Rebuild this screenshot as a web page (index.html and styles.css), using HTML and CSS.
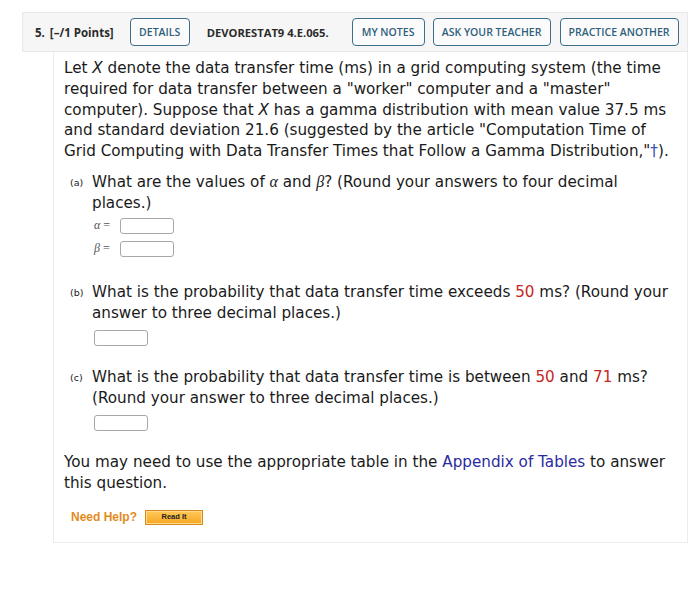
FILE: index.html
```html
<!DOCTYPE html>
<html>
<head>
<meta charset="utf-8">
<link rel="stylesheet" href="styles.css">
</head>
<body>
<div class="question">
  <div class="qhead">
    <span class="qnum">5.</span>
    <span class="qpts">[–/1 Points]</span>
    <span class="btn btn-details">DETAILS</span>
    <span class="qcode">DEVORESTAT9 4.E.065.</span>
    <span class="btn btn-notes">MY NOTES</span>
    <span class="btn btn-ask">ASK YOUR TEACHER</span>
    <span class="btn btn-practice">PRACTICE ANOTHER</span>
  </div>
  <div class="qbody">
    <p class="intro">Let <i>X</i> denote the data transfer time (ms) in a grid computing system (the time required for data transfer between a "worker" computer and a "master" computer). Suppose that <i>X</i> has a gamma distribution with mean value 37.5 ms and standard deviation 21.6 (suggested by the article "Computation Time of Grid Computing with Data Transfer Times that Follow a Gamma Distribution,"<span class="dagger">†</span>).</p>

    <div class="part part-a">
      <span class="plabel">(a)</span>
      <div class="pcontent">
        <p class="ptext">What are the values of <i class="greek">α</i> and <i class="greek">β</i>? (Round your answers to four decimal places.)</p>
        <div class="ansrow first"><span class="alabel"><i>α</i> =</span><span class="box"></span></div>
        <div class="ansrow"><span class="alabel"><i>β</i> =</span><span class="box"></span></div>
      </div>
    </div>

    <div class="part part-b">
      <span class="plabel">(b)</span>
      <div class="pcontent">
        <p class="ptext">What is the probability that data transfer time exceeds <span class="red">50</span> ms? (Round your answer to three decimal places.)</p>
        <span class="box"></span>
      </div>
    </div>

    <div class="part part-c">
      <span class="plabel">(c)</span>
      <div class="pcontent">
        <p class="ptext">What is the probability that data transfer time is between <span class="red">50</span> and <span class="red">71</span> ms? (Round your answer to three decimal places.)</p>
        <span class="box"></span>
      </div>
    </div>

    <p class="note">You may need to use the appropriate table in the <span class="link">Appendix of Tables</span> to answer this question.</p>

    <div class="help">
      <span class="helptext">Need Help?</span>
      <span class="readit">Read It</span>
    </div>
  </div>
</div>
</body>
</html>
```
FILE: styles.css
```css
html, body {
  margin: 0;
  padding: 0;
  background: #ffffff;
}
body {
  padding: 12px 0 0 22px;
}
.question {
  width: 666px;
}
.qhead {
  box-sizing: border-box;
  height: 40px;
  background: #f6f6f6;
  border: 1px solid #e8e8e8;
  display: flex;
  align-items: center;
  padding-left: 12px;
  font-family: "Open Sans", sans-serif;
  font-weight: 700;
  font-size: 11.5px;
  color: #2b2b2b;
  white-space: nowrap;
}
.qhead > span {
  flex: none;
}
.qnum {
  margin-right: 5px;
}
.qpts {
  margin-right: 16px;
}
.btn {
  box-sizing: border-box;
  height: 28px;
  display: inline-flex;
  align-items: center;
  justify-content: center;
  border: 1.5px solid #3d6f8c;
  border-radius: 4px;
  background: #fbfbfb;
  color: #2e5f7c;
  font-size: 10.5px;
  font-weight: 600;
}
.btn-details { width: 60px; }
.qcode { margin-left: 17px; margin-right: 23px; font-size: 11.2px; }
.btn-notes { width: 73px; }
.btn-ask { width: 118px; margin-left: 8px; }
.btn-practice { width: 119px; margin-left: 9px; }

.qbody {
  margin-left: 31px;
  border-left: 1px solid #ececec;
  border-right: 1px solid #ececec;
  border-bottom: 1px solid #ececec;
  padding: 6px 15px 13px 10px;
  font-family: "DejaVu Sans", Verdana, sans-serif;
  font-size: 15.2px;
  line-height: 20.75px;
  color: #1a1a1a;
}
.qbody .intro,
.qbody .ptext {
  margin: 0;
}
.dagger { color: #3b52b4; }
.greek {
  font-family: "Liberation Serif", serif;
  font-size: 16px;
}
.part {
  display: flex;
  margin-left: 6px;
}
.part-a { margin-top: 10px; }
.part-b { margin-top: 22px; }
.part-c { margin-top: 21px; }
.plabel {
  width: 22px;
  flex: none;
  font-size: 9.5px;
  font-family: "DejaVu Sans", Verdana, sans-serif;
  padding-top: 1px;
}
.pcontent {
  flex: 1;
}
.ansrow {
  display: flex;
  align-items: center;
  height: 23px;
}
.ansrow.first { margin-top: 1px; }
.alabel {
  width: 26px;
  padding-left: 2px;
  font-family: "Liberation Serif", serif;
  font-size: 12px;
  color: #555;
}
.box {
  display: block;
  box-sizing: border-box;
  width: 54px;
  height: 16px;
  border: 1px solid #a8a8a8;
  border-radius: 3px;
  background: #fff;
}
.part-b .box, .part-c .box { margin-top: 6.5px; margin-left: 2px; }
.red { color: #c8261e; }
.qbody .note {
  margin: 21px 0 0 0;
}
.link { color: #2b2ba0; }
.help {
  display: flex;
  align-items: center;
  margin-top: 13px;
  margin-left: 7px;
  height: 22px;
}
.helptext {
  font-family: "Liberation Sans", Arial, sans-serif;
  font-weight: 700;
  font-size: 12px;
  color: #e38b22;
  margin-right: 8px;
}
.readit {
  box-sizing: border-box;
  width: 58px;
  height: 15px;
  display: inline-flex;
  align-items: center;
  justify-content: center;
  background: linear-gradient(#ffc95a, #f6a623);
  border: 1px solid #d98a1c;
  box-shadow: inset 0 0 0 1px #ffd98a;
  font-family: "Liberation Sans", Arial, sans-serif;
  font-weight: 700;
  font-size: 7.5px;
  color: #222;
}
```
